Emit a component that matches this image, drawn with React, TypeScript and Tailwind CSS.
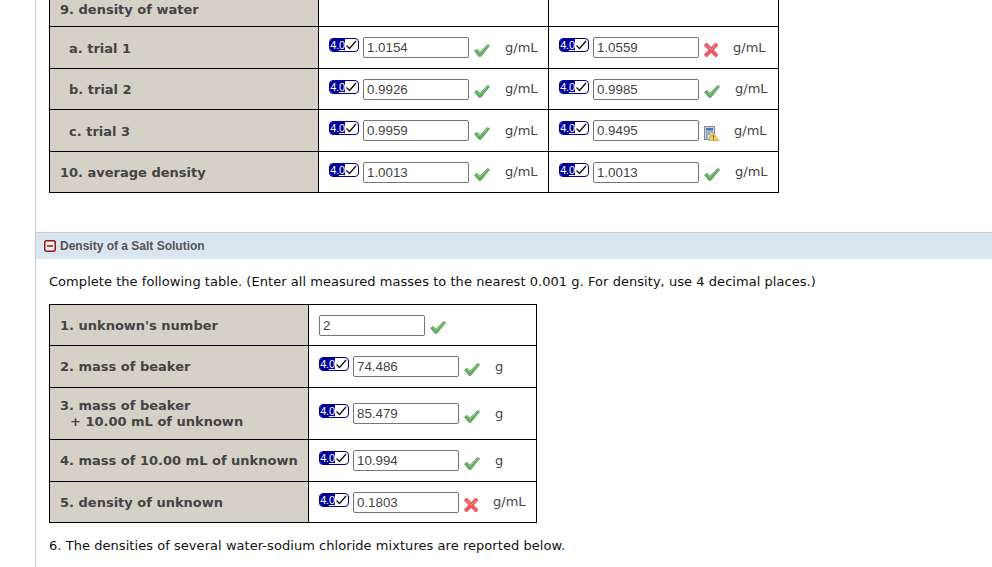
import type { ReactNode } from 'react';

type Mark = 'ok' | 'bad' | 'calc';

function Check() {
  return (
    <svg width="16" height="13" viewBox="0 0 16 13" className="shrink-0">
      <path d="M0.5 7 L3 5.3 L6 8 L13.5 0.5 L15.7 1.6 L6.8 12.6 L5 12.6 Z" fill="#63ad63" stroke="#4d944f" strokeWidth="0.6" />
      <path d="M3 6.3 L6 9 L13.5 1.6" fill="none" stroke="#8fd08c" strokeWidth="1" />
    </svg>
  );
}

function Cross() {
  return (
    <svg width="14" height="14" viewBox="0 0 14 14" className="shrink-0">
      <path d="M2.6 2.2 L11.8 11.8 M11.8 2.2 L2.6 11.8" stroke="#ee5a62" strokeWidth="4" strokeLinecap="square" />
      <path d="M2.5 2.5 L7 7 L11.5 2.5" fill="none" stroke="#f78a8e" strokeWidth="1" />
    </svg>
  );
}

function CalcWarn() {
  return (
    <svg width="15" height="15" viewBox="0 0 15 15" className="shrink-0">
      <rect x="0.5" y="0.5" width="10" height="13" fill="#c9d3de" stroke="#7d8a99" />
      <rect x="2" y="2" width="7" height="2.5" fill="#4d78b5" />
      <path d="M2 6h1.5M4.5 6H6M7 6h1.5M2 8h1.5M4.5 8H6M2 10h1.5M2 12h1.5" stroke="#56677c" strokeWidth="1" />
      <path d="M9.5 6.5 L14.8 14.6 L4.2 14.6 Z" fill="#f4cf5c" stroke="#c89a38" strokeWidth="0.7" />
      <path d="M9.5 9.2 V12 M9.5 12.8 V13.8" stroke="#5d4a1c" strokeWidth="1" />
    </svg>
  );
}

function Badge() {
  return (
    <span className="mb-[5px] flex h-[14px] w-[30px] shrink-0 overflow-hidden rounded-[4px] border border-[#000099] bg-white">
      <span className="w-[15px] bg-[#000099] text-center font-['Liberation_Sans',sans-serif] text-[11px] leading-[12px] tracking-[-0.3px] text-white">
        4.<span className="underline">0</span>
      </span>
      <svg width="13" height="12" viewBox="0 0 13 12">
        <path d="M1.5 6.5 L4.5 9.5 L11 2" fill="none" stroke="#111" strokeWidth="1.3" />
      </svg>
    </span>
  );
}

function Field({ value, w = 'w-[106px]' }: { value: string; w?: string }) {
  return (
    <input
      readOnly
      value={value}
      className={`h-[21px] ${w} shrink-0 rounded-[2px] border border-[#767676] bg-white px-[3px] font-['Liberation_Sans',sans-serif] text-[13.33px] text-[#444] outline-none`}
    />
  );
}

function Answer({ value, mark, unit }: { value: string; mark: Mark; unit: string }) {
  return (
    <div className="flex items-center pl-[10px]">
      <Badge />
      <span className="ml-[4px]">
        <Field value={value} />
      </span>
      <span className="ml-[5px] mt-[5px] flex">
        {mark === 'ok' ? <Check /> : mark === 'bad' ? <Cross /> : <CalcWarn />}
      </span>
      <span className="ml-[15px] text-[#444]">{unit}</span>
    </div>
  );
}

function Row({ h, label, indent, nudge, children }: { h: string; label: ReactNode; indent?: boolean; nudge?: boolean; children?: ReactNode }) {
  return (
    <tr className={h}>
      <td className={`border border-black bg-[#d5d1c7] pb-0 pr-0 font-bold text-[#444] ${nudge ? 'pt-[2px]' : 'pt-0'} ${indent ? 'pl-[19px]' : 'pl-[10px]'}`}>{label}</td>
      {children}
    </tr>
  );
}

const cell = 'border border-black p-0';

const waterRows: { h: string; label: string; indent?: boolean; a: [string, Mark]; b: [string, Mark] }[] = [
  { h: 'h-[42px]', label: 'a. trial 1', indent: true, a: ['1.0154', 'ok'], b: ['1.0559', 'bad'] },
  { h: 'h-[41px]', label: 'b. trial 2', indent: true, a: ['0.9926', 'ok'], b: ['0.9985', 'ok'] },
  { h: 'h-[42px]', label: 'c. trial 3', indent: true, a: ['0.9959', 'ok'], b: ['0.9495', 'calc'] },
  { h: 'h-[41px]', label: '10. average density', a: ['1.0013', 'ok'], b: ['1.0013', 'ok'] },
];

export default function App() {
  return (
    <div className="h-[567px] overflow-hidden bg-white font-['DejaVu_Sans',sans-serif] text-[13px] leading-[16px]">
      <div className="ml-[35px] flex h-full flex-col border-l border-[#cccccc]">
        <table className="ml-[13px] mt-[-8px] w-[730px] table-fixed border-collapse">
          <colgroup>
            <col className="w-[269px]" />
            <col className="w-[230px]" />
            <col className="w-[230px]" />
          </colgroup>
          <tbody>
            <Row h="h-[34px]" label="9. density of water">
              <td className={cell} />
              <td className={cell} />
            </Row>
            {waterRows.map((r) => (
              <Row key={r.label} h={r.h} label={r.label} indent={r.indent} nudge>
                <td className={cell}>
                  <Answer value={r.a[0]} mark={r.a[1]} unit="g/mL" />
                </td>
                <td className={cell}>
                  <Answer value={r.b[0]} mark={r.b[1]} unit="g/mL" />
                </td>
              </Row>
            ))}
          </tbody>
        </table>

        <div className="mt-[39px] flex h-[27px] items-center gap-[4px] border-t border-[#cccccc] bg-[#d9e5ef] pl-[8px] font-['Liberation_Sans',sans-serif] text-[12px] font-bold text-[#555]">
          <svg width="12" height="12" viewBox="0 0 12 12" className="shrink-0">
            <rect x="0.75" y="0.75" width="10.5" height="10.5" rx="2" fill="#f3eded" stroke="#8a1a1a" strokeWidth="1.5" />
            <path d="M3 6 H9" stroke="#8a1a1a" strokeWidth="1.5" />
          </svg>
          Density of a Salt Solution
        </div>

        <p className="ml-[13px] mt-[15px] tracking-[0.045px] text-[#111]">
          Complete the following table. (Enter all measured masses to the nearest 0.001 g. For density, use 4 decimal places.)
        </p>

        <table className="ml-[13px] mt-[14px] w-[487px] table-fixed border-collapse">
          <colgroup>
            <col className="w-[259px]" />
            <col className="w-[228px]" />
          </colgroup>
          <tbody>
            <Row h="h-[41px]" label="1. unknown's number" nudge>
              <td className={cell}>
                <div className="flex items-center pl-[10px]">
                  <Field value="2" w="w-[106px]" />
                  <span className="ml-[5px] mt-[5px] flex">
                    <Check />
                  </span>
                </div>
              </td>
            </Row>
            <Row h="h-[42px]" label="2. mass of beaker">
              <td className={cell}>
                <Answer value="74.486" mark="ok" unit="g" />
              </td>
            </Row>
            <Row
              h="h-[52px]"
              label={
                <>
                  3. mass of beaker
                  <br />
                  <span className="pl-[10px]">+ 10.00 mL of unknown</span>
                </>
              }
            >
              <td className={cell}>
                <Answer value="85.479" mark="ok" unit="g" />
              </td>
            </Row>
            <Row h="h-[42px]" label="4. mass of 10.00 mL of unknown">
              <td className={cell}>
                <Answer value="10.994" mark="ok" unit="g" />
              </td>
            </Row>
            <Row h="h-[41px]" label="5. density of unknown" nudge>
              <td className={cell}>
                <Answer value="0.1803" mark="bad" unit="g/mL" />
              </td>
            </Row>
          </tbody>
        </table>

        <p className="ml-[13px] mt-[15px] tracking-[0.05px] text-[#111]">6. The densities of several water-sodium chloride mixtures are reported below.</p>
      </div>
    </div>
  );
}
